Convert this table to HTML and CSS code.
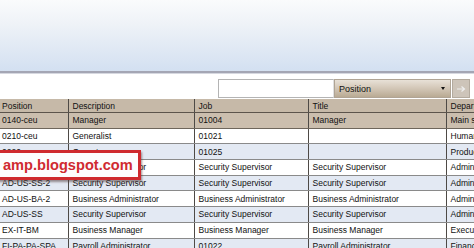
FILE: index.html
```html
<!DOCTYPE html>
<html>
<head>
<meta charset="utf-8">
<link rel="stylesheet" href="styles.css">
</head>
<body>
<div class="page">
  <div class="toolbar"></div>
  <div class="sep"></div>
  <div class="filterbar">
    <div class="search"></div>
    <div class="select"><span>Position</span><span class="caret"></span></div>
    <div class="go"><svg width="10" height="8" viewBox="0 0 10 8"><path d="M1 4h7M5.5 1.5L8.5 4 5.5 6.5" fill="none" stroke="#eee" stroke-width="1.2"/></svg></div>
  </div>
  <table class="grid">
    <colgroup><col class="c1"><col class="c2"><col class="c3"><col class="c4"><col class="c5"></colgroup>
    <thead>
      <tr><th>Position</th><th>Description</th><th>Job</th><th>Title</th><th>Department</th></tr>
    </thead>
    <tbody>
      <tr class="sel"><td>0140-ceu</td><td>Manager</td><td>01004</td><td>Manager</td><td>Main site</td></tr>
      <tr><td>0210-ceu</td><td>Generalist</td><td>01021</td><td></td><td>Human Resources</td></tr>
      <tr class="alt"><td>0220-ceu</td><td>Operator</td><td>01025</td><td></td><td>Production</td></tr>
      <tr><td>AD-US-SS-1</td><td>Security Supervisor</td><td>Security Supervisor</td><td>Security Supervisor</td><td>Administration</td></tr>
      <tr class="alt"><td>AD-US-SS-2</td><td>Security Supervisor</td><td>Security Supervisor</td><td>Security Supervisor</td><td>Administration</td></tr>
      <tr><td>AD-US-BA-2</td><td>Business Administrator</td><td>Business Administrator</td><td>Business Administrator</td><td>Administration</td></tr>
      <tr class="alt"><td>AD-US-SS</td><td>Security Supervisor</td><td>Security Supervisor</td><td>Security Supervisor</td><td>Administration</td></tr>
      <tr><td>EX-IT-BM</td><td>Business Manager</td><td>Business Manager</td><td>Business Manager</td><td>Executive</td></tr>
      <tr class="alt"><td>FI-PA-PA-SPA</td><td>Payroll Administrator</td><td>01022</td><td>Payroll Administrator</td><td>Finance</td></tr>
    </tbody>
  </table>
  <div class="watermark">amp.blogspot.com</div>
</div>
</body>
</html>
```

FILE: styles.css
```css
html, body {
  margin: 0;
  padding: 0;
  background: #fff;
  overflow: hidden;
}
.page {
  position: relative;
  width: 474px;
  height: 248px;
  overflow: hidden;
  font-family: "Liberation Sans", Arial, sans-serif;
  font-size: 8.5px;
  color: #111;
}
.toolbar {
  height: 71px;
  background: linear-gradient(to bottom, #fafbfc 0%, #eef2f7 35%, #d3e0f1 100%);
}
.sep {
  height: 2px;
  background: #a4a6b4;
  border-bottom: 1px solid #d6d8e0;
}
.filterbar {
  height: 24px;
  display: flex;
  justify-content: flex-end;
  align-items: flex-end;
  padding-right: 4px;
  box-sizing: border-box;
}
.search {
  width: 116px;
  height: 19px;
  box-sizing: border-box;
  border: 1px solid #b4b4b4;
  border-right-color: #e0e0e0;
  background: #fff;
}
.select {
  width: 117px;
  height: 19px;
  box-sizing: border-box;
  border: 1px solid #b0a494;
  background: linear-gradient(to bottom, #e8e1d7 0%, #d2c6b6 50%, #b9aa93 100%);
  display: flex;
  align-items: center;
  justify-content: space-between;
  padding: 0 5px 0 4px;
  font-size: 9px;
}
.caret {
  width: 0;
  height: 0;
  border-left: 2.5px solid transparent;
  border-right: 2.5px solid transparent;
  border-top: 3px solid #111;
}
.go {
  width: 18px;
  height: 19px;
  box-sizing: border-box;
  margin-left: 1px;
  border: 1px solid #b3aa9e;
  background: #cdc4b9;
  display: flex;
  align-items: center;
  justify-content: center;
}
.grid {
  border-collapse: collapse;
  table-layout: fixed;
  width: 520px;
  margin-top: 1px;
}
.c1 { width: 68px; }
.c2 { width: 126px; }
.c3 { width: 114px; }
.c4 { width: 138px; }
.c5 { width: 74px; }
.grid th, .grid td {
  padding: 0 0 0 4px;
  text-align: left;
  font-weight: normal;
  white-space: nowrap;
  overflow: hidden;
  border-left: 1px solid #4e4a46;
  border-bottom: 1px solid #8a8a8a;
}
.grid th:first-child, .grid td:first-child {
  border-left: none;
  padding-left: 2px;
}
.grid th {
  height: 13px;
  background: #c6b9a8;
  border-bottom: 1px solid #5c544c;
}
.grid td {
  height: 14.7px;
  background: #fff;
}
.grid tr.alt td { background: #e3e9f3; }
.grid tr.sel td { background: #cbbeae; border-bottom-color: #6e665c; }
.watermark {
  position: absolute;
  left: -6px;
  top: 150px;
  width: 147px;
  height: 30px;
  box-sizing: border-box;
  border: 3px solid #cf2a2e;
  background: #fdfdfd;
  box-shadow: 1px 2px 2px rgba(80, 60, 60, 0.55);
  color: #d02a30;
  font-weight: bold;
  font-size: 14.6px;
  line-height: 24px;
  padding-left: 6px;
  white-space: nowrap;
}
```
